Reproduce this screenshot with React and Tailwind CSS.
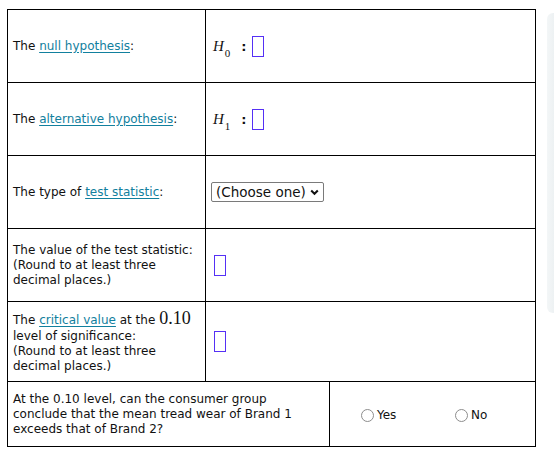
import React from "react";

const linkClassName = "text-[#12809e] underline underline-offset-[2px]";
const boxClassName = "inline-block h-[21px] w-[12px] border border-[#5530f5] bg-white";

function Hypothesis({ index }) {
  return (
    <div className="ml-[2px] flex items-center">
      <span className="font-['Liberation_Serif',serif] text-[15px] italic leading-none">H</span>
      <span className="ml-[1px] translate-y-[7px] font-['Liberation_Serif',serif] text-[11px] leading-none">{index}</span>
      <span className="ml-[11px] text-[13px] font-bold leading-none">:</span>
      <span className={`ml-[5px] ${boxClassName}`} />
    </div>
  );
}

function Row({ label, children, height }) {
  return (
    <div className={`grid grid-cols-[198px_1fr] border-b border-black ${height}`}>
      <div className="flex items-center border-r border-black pl-[5px] pr-2">
        <div>{label}</div>
      </div>
      <div className="flex items-center pl-[5px]">{children}</div>
    </div>
  );
}

function Radio({ label, width }) {
  return (
    <label className={`flex items-center ${width}`}>
      <span className="h-[13px] w-[13px] rounded-full border border-[#8d8d8d] bg-white" />
      <span className="ml-[3px]">{label}</span>
    </label>
  );
}

export default function App() {
  return (
    <div className="relative h-[464px] w-[554px] overflow-hidden bg-white pl-[7px] pt-[9px] font-['DejaVu_Sans',Verdana,sans-serif] text-[12px] leading-[15px] text-[#111]">
      <div className="w-[529px] border border-black">
        <Row height="h-[73px]" label={<>The <span className={linkClassName}>null hypothesis</span>:</>}>
          <Hypothesis index="0" />
        </Row>
        <Row height="h-[73px]" label={<>The <span className={linkClassName}>alternative hypothesis</span>:</>}>
          <Hypothesis index="1" />
        </Row>
        <Row height="h-[73px]" label={<>The type of <span className={linkClassName}>test statistic</span>:</>}>
          <div className="flex h-[20px] w-[113px] items-center rounded-[2px] border border-[#7a7a7a] bg-white pl-[4px] text-[13.5px]">
            <span>(Choose one)</span>
            <svg className="ml-[4px]" width="9" height="7" viewBox="0 0 9 7">
              <path d="M1.2 1.5 L4.5 4.8 L7.8 1.5" fill="none" stroke="#111" strokeWidth="2" />
            </svg>
          </div>
        </Row>
        <Row
          height="h-[73px]"
          label={
            <>
              The value of the test statistic:
              <br />
              (Round to at least three
              <br />
              decimal places.)
            </>
          }
        >
          <span className={`ml-[3px] ${boxClassName}`} />
        </Row>
        <Row
          height="h-[80px]"
          label={
            <>
              <div className="leading-[18px]">
                The <span className={linkClassName}>critical value</span> at the{" "}
                <span className="font-['Liberation_Serif',serif] text-[18px] leading-[18px]">0.10</span>
              </div>
              level of significance:
              <br />
              (Round to at least three
              <br />
              decimal places.)
            </>
          }
        >
          <span className={`ml-[3px] ${boxClassName}`} />
        </Row>
        <div className="grid h-[64px] grid-cols-[322px_1fr]">
          <div className="flex items-center border-r border-black pl-[5px]">
            <div>
              At the 0.10 level, can the consumer group
              <br />
              conclude that the mean tread wear of Brand 1
              <br />
              exceeds that of Brand 2?
            </div>
          </div>
          <div className="flex items-center pl-[31px] pt-[3px]">
            <Radio label="Yes" width="w-[94px]" />
            <Radio label="No" width="w-auto" />
          </div>
        </div>
      </div>
      <div className="absolute left-[547px] top-[13px] h-[300px] w-[12px] rounded-[6px] bg-gradient-to-r from-[#f3f6f7] to-[#e9eef0]" />
    </div>
  );
}
